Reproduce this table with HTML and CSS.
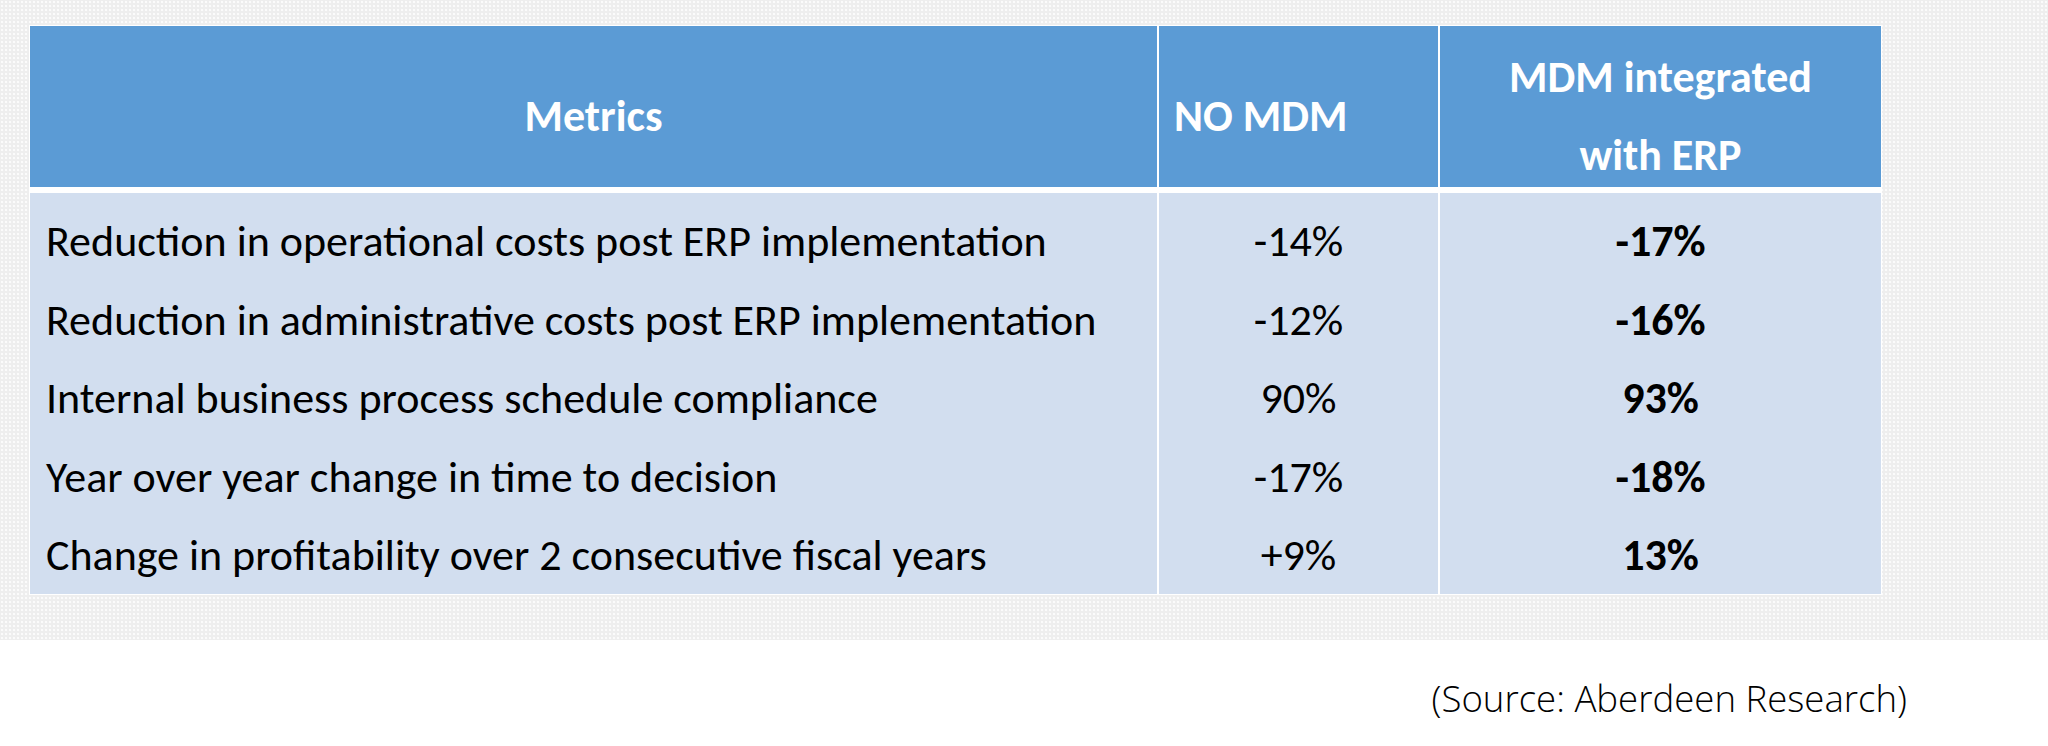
FILE: index.html
```html
<!DOCTYPE html>
<html lang="en">
<head>
<meta charset="utf-8">
<title>MDM vs ERP metrics</title>
<link rel="stylesheet" href="styles.css">
</head>
<body>
<div class="slide">
  <table class="metrics">
    <thead>
      <tr>
        <th class="col-metric"><div class="th-text">Metrics</div></th>
        <th class="col-no"><div class="th-text">NO MDM</div></th>
        <th class="col-mdm"><div class="th-text">MDM integrated<br>with ERP</div></th>
      </tr>
    </thead>
    <tbody>
      <tr>
        <td class="label">Reduction in operational costs post ERP implementation</td>
        <td class="val">-14%</td>
        <td class="val strong">-17%</td>
      </tr>
      <tr>
        <td class="label">Reduction in administrative costs post ERP implementation</td>
        <td class="val">-12%</td>
        <td class="val strong">-16%</td>
      </tr>
      <tr>
        <td class="label">Internal business process schedule compliance</td>
        <td class="val">90%</td>
        <td class="val strong">93%</td>
      </tr>
      <tr>
        <td class="label">Year over year change in time to decision</td>
        <td class="val">-17%</td>
        <td class="val strong">-18%</td>
      </tr>
      <tr>
        <td class="label">Change in profitability over 2 consecutive fiscal years</td>
        <td class="val">+9%</td>
        <td class="val strong">13%</td>
      </tr>
    </tbody>
  </table>
</div>
<div class="source">(Source: Aberdeen Research)</div>
</body>
</html>
```

FILE: styles.css
```css
html, body {
  margin: 0;
  padding: 0;
  background: #ffffff;
}

.slide {
  height: 640px;
  box-sizing: border-box;
  padding: 25px 0 0 29px;
  background-color: #eeeeee;
  background-image: radial-gradient(circle, #fbfbfb 1.1px, transparent 1.6px);
  background-size: 4px 4px;
}

.metrics {
  table-layout: fixed;
  border-collapse: separate;
  border-spacing: 0;
  border: 1px solid #ffffff;
  width: 1853px;
  font-family: "Carlito", "Calibri", "Lato", "Noto Sans", sans-serif;
}

.metrics th,
.metrics td {
  box-sizing: border-box;
  border-right: 2px solid #ffffff;
}

.metrics th:last-child,
.metrics td:last-child {
  border-right: none;
}

.col-metric { width: 1129px; }
.col-no { width: 281px; }
.col-mdm { width: 441px; }

.metrics th {
  height: 167px;
  border-bottom: 6px solid #ffffff;
  background: #5b9bd5;
  color: #ffffff;
  font-weight: 700;
  font-size: 44px;
  padding: 19px 8px 0;
  vertical-align: middle;
  text-align: center;
}

.metrics th.col-no {
  text-align: left;
  padding-left: 15px;
}

.th-text {
  line-height: 78px;
  margin: -8px 0;
}

.metrics td {
  height: 78.5px;
  background: #d2deef;
  color: #000000;
  font-size: 44px;
  line-height: 55px;
  padding: 21px 16px 0;
  vertical-align: top;
  white-space: nowrap;
}

.metrics tbody tr:last-child td {
  height: 87px;
}

.metrics td.label {
  text-align: left;
}

.metrics td.val {
  text-align: center;
}

.metrics td.strong {
  font-weight: 700;
}

.source {
  height: 106px;
  box-sizing: border-box;
  padding: 10px 141px 0 0;
  display: flex;
  align-items: center;
  justify-content: flex-end;
  font-family: "Open Sans", "Noto Sans", sans-serif;
  font-weight: 300;
  font-size: 36.6px;
  color: #000000;
}
```
